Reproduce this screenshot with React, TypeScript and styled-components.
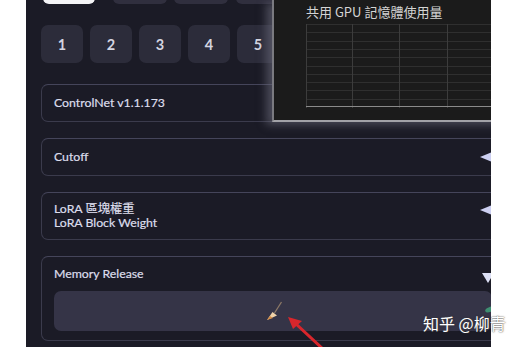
import React from "react";
import styled, { createGlobalStyle } from "styled-components";

const Global = createGlobalStyle`
  html, body { margin: 0; padding: 0; background: #ffffff; overflow: hidden; }
  * { box-sizing: border-box; }
`;

const Page = styled.div`
  position: relative;
  width: 517px;
  height: 347px;
  overflow: hidden;
  background: #ffffff;
  padding-left: 26px;
  display: flex;
  font-family: "Lato", "Noto Sans CJK TC", sans-serif;
`;

const Panel = styled.div`
  position: relative;
  width: 465px;
  height: 347px;
  flex: none;
  overflow: hidden;
  background: #1b1b26;
  padding-left: 15px;
`;

const Column = styled.div`
  width: 464px;
  display: flex;
  flex-direction: column;
`;

const TopRow = styled.div`
  display: flex;
  margin-top: -26px;
  height: 30px;
  padding-left: 2px;
`;

const TopButton = styled.div<{ $light?: boolean; $w: number; $ml: number }>`
  width: ${(p) => p.$w}px;
  margin-left: ${(p) => p.$ml}px;
  height: 30px;
  border-radius: 6px;
  background: ${(p) => (p.$light ? "#f4f4f6" : "#302f3e")};
  flex: none;
`;

const NumberRow = styled.div`
  display: flex;
  gap: 7px;
  margin-top: 21px;
`;

const NumberButton = styled.div`
  width: 42px;
  height: 38px;
  flex: none;
  border-radius: 7px;
  background: #2c2c3a;
  color: #d4d5e0;
  font-size: 14.5px;
  font-weight: 700;
  display: flex;
  align-items: center;
  justify-content: center;
`;

const Box = styled.div<{ $mt: number }>`
  margin-top: ${(p) => p.$mt}px;
  border: 1px solid #3b3b4c;
  border-top-color: #45455a;
  border-radius: 7px;
  padding: ${(p) => (p.$mt === 21 ? "10px" : "9px")} 12px;
  display: flex;
  flex-direction: column;
`;

const Header = styled.div`
  display: flex;
  justify-content: space-between;
  align-items: flex-start;
`;

const Title = styled.div<{ $lh: number }>`
  color: #dddeec;
  font-size: 12.3px;
  line-height: ${(p) => p.$lh}px;
  white-space: nowrap;
  -webkit-text-stroke: 0.2px #dddeec;
`;

const IconSlot = styled.div<{ $h: number; $dy?: number }>`
  width: 12px;
  height: ${(p) => p.$h}px;
  display: flex;
  align-items: center;
  padding-top: ${(p) => p.$dy ?? 0}px;
`;

const LeftTriangle = styled.div`
  width: 0;
  height: 0;
  border-top: 5.5px solid transparent;
  border-bottom: 5.5px solid transparent;
  border-right: 12px solid #cdd0f2;
`;

const DownTriangle = styled.div`
  width: 0;
  height: 0;
  margin-left: 2px;
  border-left: 6px solid transparent;
  border-right: 6px solid transparent;
  border-top: 10px solid #dde0f5;
`;

const ActionButton = styled.div`
  margin-top: 9px;
  height: 40px;
  border-radius: 7px;
  background: #353447;
  display: flex;
  align-items: center;
  justify-content: center;
  padding-left: 3px;
`;

const GpuWindow = styled.div`
  position: absolute;
  left: 246px;
  top: 0;
  width: 240px;
  height: 122px;
  background: #1b1b1b;
  border-left: 2px solid #7a7a80;
  border-bottom: 2px solid #a2a2a8;
  box-shadow: -6px 3px 8px rgba(110, 110, 125, 0.55);
  padding-left: 32px;
  display: flex;
  flex-direction: column;
`;

const GpuTitle = styled.div`
  margin-top: 3px;
  color: #d4d4d4;
  font-family: "Noto Sans CJK TC", "Noto Sans", sans-serif;
  font-size: 13px;
  line-height: 17px;
  white-space: nowrap;
`;

const Graph = styled.svg`
  margin-top: 4px;
  display: block;
  flex: none;
`;

const GreenMark = styled.div`
  position: absolute;
  left: 459px;
  top: 307px;
  width: 10px;
  height: 5px;
  border-radius: 50%;
  background: #3f8f72;
  transform: rotate(-20deg);
`;

const Watermark = styled.div`
  position: absolute;
  left: 423px;
  top: 312px;
  color: #ffffff;
  font-family: "Noto Sans CJK SC", sans-serif;
  font-size: 16px;
  line-height: 22px;
  white-space: nowrap;
  text-shadow: 0 0 2px rgba(60, 60, 60, 0.8), 0 0 1px rgba(60, 60, 60, 0.8);
`;

const ArrowSvg = styled.svg`
  position: absolute;
  left: 280px;
  top: 308px;
  overflow: visible;
`;

const Broom = () => (
  <svg width="17" height="21" viewBox="0 0 17 21">
    <line x1="15.5" y1="1" x2="8.5" y2="12" stroke="#8c7866" strokeWidth="1.3" />
    <polygon points="1,19 6.5,11 11,14.5" fill="#efd2a8" />
    <polygon points="1,19 4,15 7,17" fill="#d48b45" />
  </svg>
);

const GpuGraph = () => {
  const w = 200;
  const h = 84;
  const rows = Array.from({ length: 10 }, (_, i) => Math.round(i * 8.3) + 0.5);
  const cols = [46.5, 93.5, 141.5, 188.5];
  return (
    <Graph width={w} height={h} viewBox={`0 0 ${w} ${h}`}>
      {rows.map((y) => (
        <line key={y} x1="0" y1={y} x2={w} y2={y} stroke="#2f2f2f" strokeWidth="1" />
      ))}
      {cols.map((x) => (
        <line key={x} x1={x} y1="0" x2={x} y2={h} stroke="#3c3c3c" strokeWidth="1" />
      ))}
      <line x1="0.5" y1="0" x2="0.5" y2={h} stroke="#3c3c3c" strokeWidth="1" />
      <line x1="0" y1={h - 1.5} x2={w} y2={h - 1.5} stroke="#8a8a8a" strokeWidth="1.2" />
    </Graph>
  );
};

export default function App() {
  return (
    <>
      <Global />
      <Page>
        <Panel>
          <Column>
            <TopRow>
              <TopButton $light $w={52} $ml={0} />
              <TopButton $w={54} $ml={18} />
              <TopButton $w={54} $ml={7} />
              <TopButton $w={54} $ml={8} />
            </TopRow>
            <NumberRow>
              {["1", "2", "3", "4", "5", "6"].map((n) => (
                <NumberButton key={n}>{n}</NumberButton>
              ))}
            </NumberRow>
            <Box $mt={21}>
              <Header>
                <Title $lh={16}>ControlNet v1.1.173</Title>
                <IconSlot $h={16}>
                  <LeftTriangle />
                </IconSlot>
              </Header>
            </Box>
            <Box $mt={16}>
              <Header>
                <Title $lh={18}>Cutoff</Title>
                <IconSlot $h={18}>
                  <LeftTriangle />
                </IconSlot>
              </Header>
            </Box>
            <Box $mt={16}>
              <Header>
                <Title $lh={14}>
                  LoRA 區塊權重
                  <br />
                  LoRA Block Weight
                </Title>
                <IconSlot $h={15}>
                  <LeftTriangle />
                </IconSlot>
              </Header>
            </Box>
            <Box $mt={16}>
              <Header>
                <Title $lh={16}>Memory Release</Title>
                <IconSlot $h={16} $dy={8}>
                  <DownTriangle />
                </IconSlot>
              </Header>
              <ActionButton>
                <Broom />
              </ActionButton>
            </Box>
          </Column>
          <GpuWindow>
            <GpuTitle>共用 GPU 記憶體使用量</GpuTitle>
            <GpuGraph />
          </GpuWindow>
          <GreenMark />
        </Panel>
        <ArrowSvg width="50" height="45" viewBox="0 0 50 45">
          <line x1="44" y1="42" x2="15" y2="15" stroke="#d8262c" strokeWidth="3" strokeLinecap="round" />
          <polygon points="8,9 22,13 13,21" fill="#d8262c" />
        </ArrowSvg>
        <Watermark>知乎 @柳青</Watermark>
      </Page>
    </>
  );
}
